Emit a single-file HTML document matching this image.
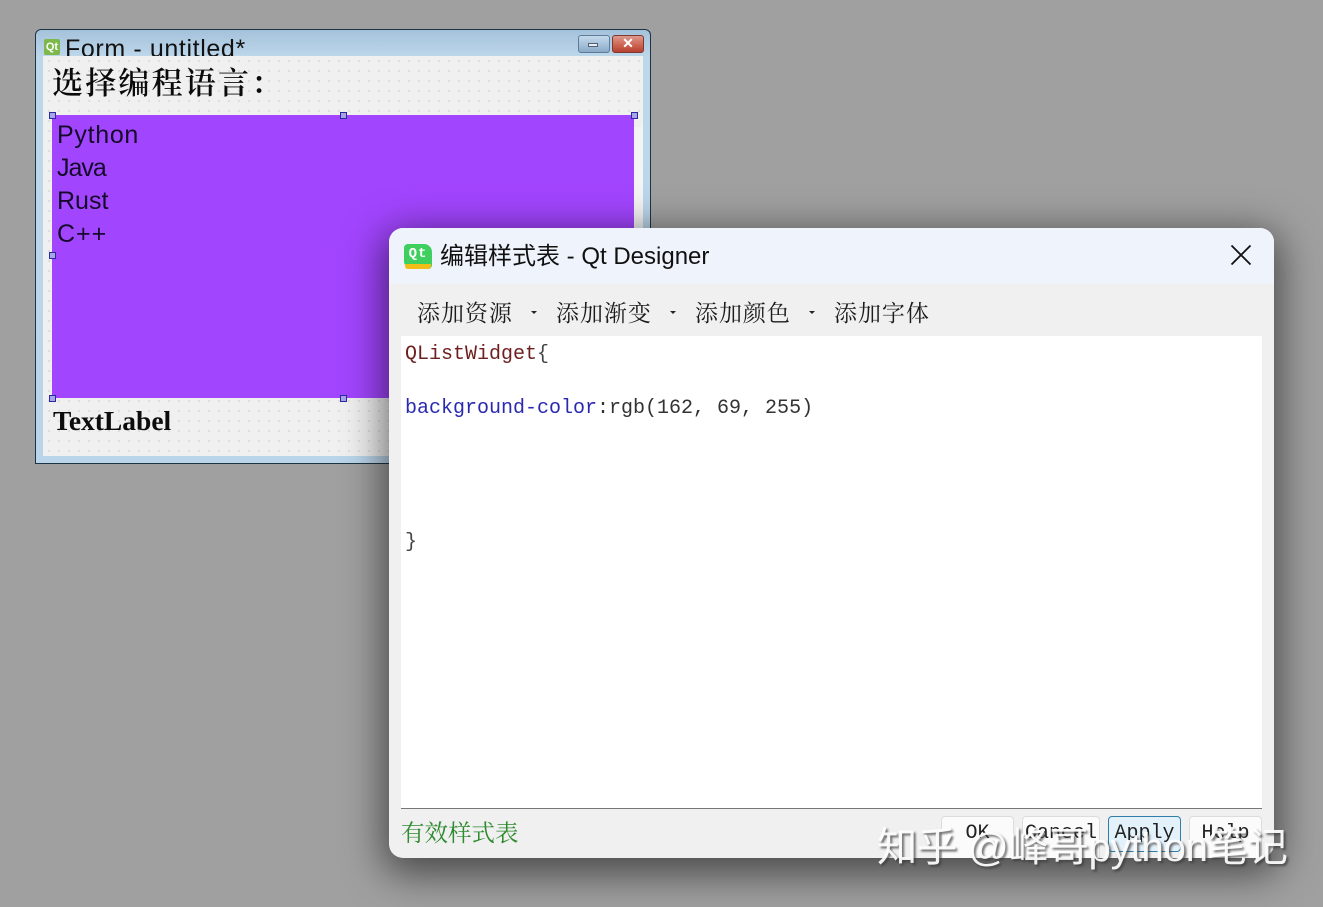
<!DOCTYPE html>
<html><head><meta charset="utf-8">
<style>
html,body{margin:0;padding:0}
body{width:1323px;height:907px;overflow:hidden;position:relative;background:#a0a0a0;font-family:"Liberation Sans","Noto Sans CJK SC",sans-serif;color:#000}
.a{position:absolute;white-space:nowrap}
.h{position:absolute;width:5px;height:5px;background:#a9a4e8;border:1px solid #2a2aa0}
.dots{background-color:#f0f0f0;background-image:radial-gradient(circle at 1px 1px,#c8c8c8 .6px,transparent .9px);background-size:10px 10px;background-position:5px 4px}
.tb{font-family:"Noto Serif CJK SC","Noto Sans CJK SC",serif;font-size:23px;color:#1c1c1c;line-height:30px;letter-spacing:.95px}
.tri{position:absolute;width:0;height:0;border-left:3px solid transparent;border-right:3px solid transparent;border-top:3px solid #222}
.code{position:absolute;left:405px;font-family:"Liberation Mono","Noto Sans CJK SC",monospace;font-size:20px;line-height:26px;white-space:pre}
.btn{position:absolute;top:816px;height:42px;box-sizing:border-box;background:#fbfbfb;border:1px solid #dcdcdc;border-radius:4px 4px 0 0;font-family:"Liberation Mono",monospace;font-size:20px;text-align:center;line-height:33px;color:#222;border-bottom:0}
</style></head><body>

<!-- Form window -->
<div class="a" style="left:35px;top:29px;width:616px;height:435px;box-sizing:border-box;border:1px solid #1e3442;border-radius:6px 6px 0 0;background:linear-gradient(#a5c2db 0,#bcd6ea 26px,#bad5ea 100%);overflow:hidden"></div>
<div class="a" style="left:44px;top:39px;width:16px;height:16px;background:#7cb84a;border-radius:2px;color:#fff;font:bold 11px/16px 'Liberation Sans',sans-serif;text-align:center">Qt</div>
<div class="a" style="left:65px;top:34px;font-size:25px;line-height:30px;height:22px;overflow:hidden;color:#111;letter-spacing:.62px">Form - untitled*</div>
<!-- min / close -->
<div class="a" style="left:578px;top:35px;width:32px;height:18px;box-sizing:border-box;border:1px solid #5d7c99;border-radius:3px;background:linear-gradient(#c5d8ea,#a9c3dc 50%,#8ba9c6)"></div>
<div class="a" style="left:588px;top:43px;width:10px;height:4px;box-sizing:border-box;background:#e8eef4;border:1px solid #51616f"></div>
<div class="a" style="left:612px;top:35px;width:32px;height:18px;box-sizing:border-box;border:1px solid #7d3a32;border-radius:3px;background:linear-gradient(#dc9a8d,#cf6a58 50%,#b8402e)"></div>
<div class="a" style="left:612px;top:35px;width:32px;height:18px;color:#fff;font:bold 14px/17px 'Liberation Sans',sans-serif;text-align:center">✕</div>

<!-- Form contents -->
<div class="a dots" style="left:43px;top:56px;width:600px;height:400px"></div>
<div class="a" style="left:52px;top:61px;font-family:'Noto Serif CJK SC',serif;font-size:31px;font-weight:600;line-height:40px;letter-spacing:2.2px;color:#0b0b0b">选择编程语言：</div>
<div class="a" style="left:52px;top:115px;width:582px;height:283px;background:#a245ff"></div>
<div class="a" style="left:634px;top:115px;width:9px;height:12px;background:#f0f0f0"></div>
<div class="a" style="left:634px;top:127px;width:9px;height:270px;background:#f4f4f4"></div>
<div class="a" style="left:57px;top:119px;font-size:25px;line-height:33px;color:#150a2a;letter-spacing:.7px">Python</div>
<div class="a" style="left:57px;top:152px;font-size:25px;line-height:33px;color:#150a2a;letter-spacing:-1px">Java</div>
<div class="a" style="left:57px;top:185px;font-size:25px;line-height:33px;color:#150a2a">Rust</div>
<div class="a" style="left:57px;top:218px;font-size:25px;line-height:33px;color:#150a2a;letter-spacing:1px">C++</div>
<div class="a" style="left:53px;top:403px;font-family:'Liberation Serif',serif;font-weight:bold;font-size:27.5px;line-height:36px;color:#0c0c0c">TextLabel</div>
<div class="h" style="left:49px;top:112px"></div>
<div class="h" style="left:340px;top:112px"></div>
<div class="h" style="left:631px;top:112px"></div>
<div class="h" style="left:49px;top:252px"></div>
<div class="h" style="left:49px;top:395px"></div>
<div class="h" style="left:340px;top:395px"></div>

<!-- Dialog -->
<div class="a" style="left:389px;top:228px;width:885px;height:630px;background:#f0f0f0;border-radius:14px;box-shadow:0 10px 40px 6px rgba(0,0,0,.55);overflow:hidden">
  <div style="position:absolute;left:0;top:0;width:885px;height:56px;background:#eff3fb"></div>
</div>
<!-- Qt logo -->
<div class="a" style="left:404px;top:244px;width:28px;height:25px;background:#3fcf5f;border-radius:4px 8px 4px 8px;color:#fff;font:bold 14px/20px 'Liberation Mono',monospace;text-align:center;letter-spacing:1px">Qt</div>
<div class="a" style="left:405px;top:264px;width:26px;height:5px;background:#f3bd18;border-radius:0 0 3px 3px"></div>
<div class="a" style="left:440px;top:240px;font-size:24px;line-height:33px;color:#111">编辑样式表 - Qt Designer</div>
<svg class="a" style="left:1230px;top:244px" width="22" height="22" viewBox="0 0 22 22"><path d="M1.5 1.5L20.5 20.5M20.5 1.5L1.5 20.5" stroke="#111" stroke-width="1.8" fill="none"/></svg>

<div class="a tb" style="left:417px;top:297px">添加资源</div>
<div class="tri" style="left:531px;top:311px"></div>
<div class="a tb" style="left:556px;top:297px">添加渐变</div>
<div class="tri" style="left:670px;top:311px"></div>
<div class="a tb" style="left:695px;top:297px">添加颜色</div>
<div class="tri" style="left:809px;top:311px"></div>
<div class="a tb" style="left:834px;top:297px">添加字体</div>

<!-- Editor -->
<div class="a" style="left:401px;top:336px;width:861px;height:473px;box-sizing:border-box;background:#fff;border-bottom:1px solid #777"></div>
<div class="code" style="top:342px;color:#6e1f1f">QListWidget<span style="color:#444">{</span></div>
<div class="code" style="top:396px;color:#2a2ab0">background-color<span style="color:#333">:rgb(162, 69, 255)</span></div>
<div class="code" style="top:530px;color:#444">}</div>

<div class="a" style="left:401px;top:815px;font-family:'Noto Serif CJK SC',serif;font-size:23.5px;line-height:32px;color:#2f8a2f">有效样式表</div>

<!-- Buttons -->
<div class="btn" style="left:941px;width:73px">OK</div>
<div class="btn" style="left:1022px;width:78px">Cancel</div>
<div class="btn" style="left:1108px;width:73px;height:36px;background:#e3f1fb;border:1px solid #2f7da8;border-bottom:1px solid #2f7da8;border-radius:4px">Apply</div>
<div class="btn" style="left:1189px;width:73px">Help</div>

<!-- Watermark -->
<div class="a" style="left:877px;top:825px;font-size:40.3px;line-height:46px;color:rgba(255,255,255,.93);text-shadow:2px 2px 2px rgba(60,60,60,.75);letter-spacing:-.3px">知乎 @峰哥python笔记</div>
</body></html>
